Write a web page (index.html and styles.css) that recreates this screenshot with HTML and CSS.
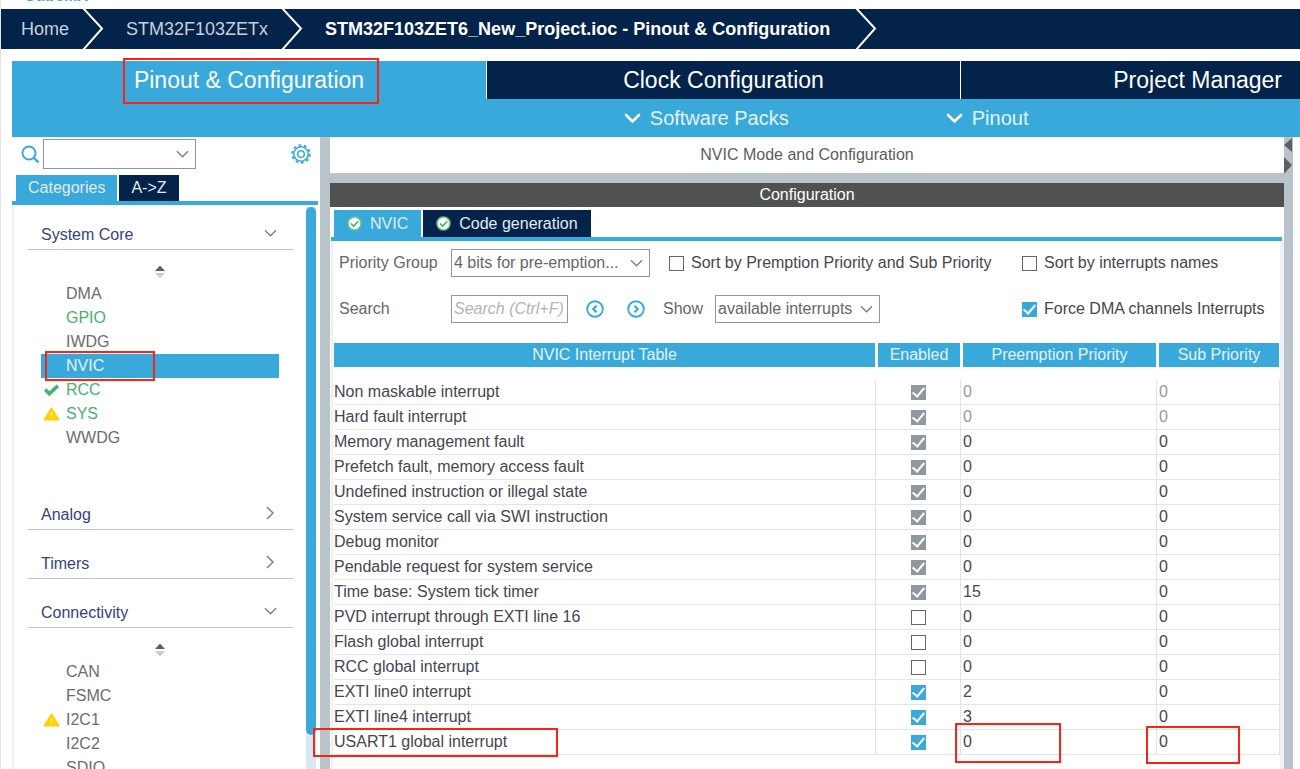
FILE: index.html
```html
<!DOCTYPE html>
<html lang="en">
<head>
<meta charset="utf-8">
<title>STM32CubeMX</title>
<link rel="stylesheet" href="styles.css">
</head>
<body>
<svg class="defs" aria-hidden="true">
  <symbol id="down" viewBox="0 0 14 8"><path d="M1 1l6 6 6-6" fill="none" stroke="currentColor" stroke-width="1.5"/></symbol>
  <symbol id="right" viewBox="0 0 8 14"><path d="M1 1l6 6-6 6" fill="none" stroke="currentColor" stroke-width="1.5"/></symbol>
  <symbol id="thick" viewBox="0 0 17 11"><path d="M2 2l6.500 6.500L15 2" fill="none" stroke="currentColor" stroke-width="2.600" stroke-linecap="round"/></symbol>
  <symbol id="crumb" viewBox="0 0 22 40"><path d="M1 -1L20 19.500L1 41" fill="none" stroke="currentColor" stroke-width="2"/></symbol>
  <symbol id="sort" viewBox="0 0 10 14"><path d="M0 6L5 0.500L10 6z" fill="#5f6161"/><path d="M0 8h10L5 13.500z" fill="#cdcdcd"/></symbol>
  <symbol id="tick" viewBox="0 0 16 12"><path d="M2 5.500l4 4L14 2" fill="none" stroke="#49b170" stroke-width="3.400"/></symbol>
  <symbol id="warn" viewBox="0 0 18 15"><path d="M9 1.500L16.500 13.500H1.500z" fill="#ffd200" stroke="#ffd200" stroke-width="2" stroke-linejoin="round"/><path d="M9 5v4.500M9 11v1.500" stroke="#fff3b0" stroke-width="1.500"/></symbol>
  <symbol id="ok" viewBox="0 0 15 15"><circle cx="7.500" cy="7.500" r="6.500" fill="#fff" stroke="#6cc48d" stroke-width="1.500"/><path d="M4 7.500l2.700 2.700L11.200 5.200" fill="none" stroke="#49b170" stroke-width="1.700"/></symbol>
  <symbol id="next" viewBox="0 0 18 18"><circle cx="9" cy="9" r="7.800" fill="none" stroke="#39a9dc" stroke-width="1.900"/><path d="M7.500 5.800L10.700 9l-3.200 3.200" fill="none" stroke="#39a9dc" stroke-width="2.200"/></symbol>
  <symbol id="prev" viewBox="0 0 18 18"><circle cx="9" cy="9" r="7.800" fill="none" stroke="#39a9dc" stroke-width="1.900"/><path d="M10.500 5.800L7.300 9l3.200 3.200" fill="none" stroke="#39a9dc" stroke-width="2.200"/></symbol>
</svg>

<div class="app">
  <header class="brand">CubeMX</header>
  <nav class="crumbs" aria-label="Breadcrumb">
    <a href="#home">Home</a><svg><use href="#crumb"/></svg>
    <a href="#device">STM32F103ZETx</a><svg><use href="#crumb"/></svg>
    <a class="current" href="#project">STM32F103ZET6_New_Project.ioc - Pinout &amp; Configuration</a><svg><use href="#crumb"/></svg>
  </nav>

  <div class="workspace">
    <div class="main-tabs">
      <button class="main-tab active"><span class="marked">Pinout &amp; Configuration<i class="mark mark-tab"></i></span></button>
      <button class="main-tab">Clock Configuration</button>
      <button class="main-tab last">Project Manager</button>
    </div>
    <div class="submenu">
      <button><svg><use href="#thick"/></svg>Software Packs</button>
      <button><svg><use href="#thick"/></svg>Pinout</button>
    </div>

    <div class="panes">
      <aside class="side">
        <div class="finder">
          <svg class="magnifier" viewBox="0 0 18 18"><circle cx="8" cy="8" r="6.500" fill="none" stroke="#39a9dc" stroke-width="2"/><path d="M12.500 12.500l5 5" stroke="#39a9dc" stroke-width="2.400"/></svg>
          <span class="combo"><select aria-label="Find peripheral"><option></option></select><svg><use href="#down"/></svg></span>
          <button class="gear" aria-label="Settings"><svg viewBox="0 0 20 20" fill="none" stroke="#39a9dc"><circle cx="10" cy="10" r="3.300" stroke-width="1.500"/><circle cx="10" cy="10" r="7.200" stroke-width="1.500"/><circle cx="10" cy="10" r="8.800" stroke-width="2" stroke-dasharray="2.764 2.764"/></svg></button>
        </div>
        <div class="tabs">
          <button class="tab active">Categories</button>
          <button class="tab">A-&gt;Z</button>
        </div>
        <div class="tree">
          <div class="sections">
            <button class="section">System Core<svg class="open"><use href="#down"/></svg></button>
            <div class="group">
              <svg class="sort"><use href="#sort"/></svg>
              <ul>
                <li><a href="#dma">DMA</a></li>
                <li><a class="green" href="#gpio">GPIO</a></li>
                <li><a href="#iwdg">IWDG</a></li>
                <li><a class="selected" href="#nvic">NVIC<i class="mark mark-item"></i></a></li>
                <li><a class="green" href="#rcc"><svg><use href="#tick"/></svg>RCC</a></li>
                <li><a class="green" href="#sys"><svg><use href="#warn"/></svg>SYS</a></li>
                <li><a href="#wwdg">WWDG</a></li>
              </ul>
            </div>
            <button class="section">Analog<svg class="closed"><use href="#right"/></svg></button>
            <button class="section">Timers<svg class="closed"><use href="#right"/></svg></button>
            <button class="section">Connectivity<svg class="open"><use href="#down"/></svg></button>
            <div class="group">
              <svg class="sort"><use href="#sort"/></svg>
              <ul>
                <li><a href="#can">CAN</a></li>
                <li><a href="#fsmc">FSMC</a></li>
                <li><a href="#i2c1"><svg><use href="#warn"/></svg>I2C1</a></li>
                <li><a href="#i2c2">I2C2</a></li>
                <li><a href="#sdio">SDIO</a></li>
              </ul>
            </div>
          </div>
          <div class="track"><div class="thumb"></div></div>
        </div>
      </aside>

      <div class="splitter"></div>

      <main class="content">
        <h1>NVIC Mode and Configuration</h1>
        <h2>Configuration</h2>
        <div class="tabs">
          <button class="tab active"><svg><use href="#ok"/></svg>NVIC</button>
          <button class="tab"><svg><use href="#ok"/></svg>Code generation</button>
        </div>
        <div class="config">
          <div class="filters">
            <label for="group">Priority Group</label>
            <div class="line">
              <span class="combo combo-group"><select id="group"><option>4 bits for pre-emption...</option></select><svg><use href="#down"/></svg></span>
              <label class="check"><input type="checkbox">Sort by Premption Priority and Sub Priority</label>
            </div>
            <label class="check"><input type="checkbox">Sort by interrupts names</label>

            <label for="search">Search</label>
            <div class="line">
              <input class="search" id="search" type="text" placeholder="Search (Ctrl+F)">
              <span class="steps">
                <button aria-label="Previous"><svg><use href="#prev"/></svg></button>
                <button aria-label="Next"><svg><use href="#next"/></svg></button>
              </span>
              <label class="show" for="show">Show</label>
              <span class="combo combo-show"><select id="show"><option>available interrupts</option></select><svg><use href="#down"/></svg></span>
            </div>
            <label class="check"><input type="checkbox" checked>Force DMA channels Interrupts</label>
          </div>

          <table>
            <colgroup><col><col class="c-on"><col class="c-pre"><col class="c-sub"></colgroup>
            <thead><tr><th>NVIC Interrupt Table</th><th>Enabled</th><th>Preemption Priority</th><th>Sub Priority</th></tr></thead>
            <tbody>
              <tr class="spacer"><td colspan="4"></td></tr>
              <tr class="fixed"><td>Non maskable interrupt</td><td><input type="checkbox" aria-label="Non maskable interrupt" checked disabled></td><td>0</td><td>0</td></tr>
              <tr class="fixed"><td>Hard fault interrupt</td><td><input type="checkbox" aria-label="Hard fault interrupt" checked disabled></td><td>0</td><td>0</td></tr>
              <tr><td>Memory management fault</td><td><input type="checkbox" aria-label="Memory management fault" checked disabled></td><td>0</td><td>0</td></tr>
              <tr><td>Prefetch fault, memory access fault</td><td><input type="checkbox" aria-label="Prefetch fault" checked disabled></td><td>0</td><td>0</td></tr>
              <tr><td>Undefined instruction or illegal state</td><td><input type="checkbox" aria-label="Undefined instruction" checked disabled></td><td>0</td><td>0</td></tr>
              <tr><td>System service call via SWI instruction</td><td><input type="checkbox" aria-label="System service call" checked disabled></td><td>0</td><td>0</td></tr>
              <tr><td>Debug monitor</td><td><input type="checkbox" aria-label="Debug monitor" checked disabled></td><td>0</td><td>0</td></tr>
              <tr><td>Pendable request for system service</td><td><input type="checkbox" aria-label="Pendable request" checked disabled></td><td>0</td><td>0</td></tr>
              <tr><td>Time base: System tick timer</td><td><input type="checkbox" aria-label="System tick timer" checked disabled></td><td>15</td><td>0</td></tr>
              <tr><td>PVD interrupt through EXTI line 16</td><td><input type="checkbox" aria-label="PVD interrupt"></td><td>0</td><td>0</td></tr>
              <tr><td>Flash global interrupt</td><td><input type="checkbox" aria-label="Flash global interrupt"></td><td>0</td><td>0</td></tr>
              <tr><td>RCC global interrupt</td><td><input type="checkbox" aria-label="RCC global interrupt"></td><td>0</td><td>0</td></tr>
              <tr><td>EXTI line0 interrupt</td><td><input type="checkbox" aria-label="EXTI line0 interrupt" checked></td><td>2</td><td>0</td></tr>
              <tr><td>EXTI line4 interrupt</td><td><input type="checkbox" aria-label="EXTI line4 interrupt" checked></td><td>3</td><td>0</td></tr>
              <tr><td>USART1 global interrupt<i class="mark mark-name"></i></td><td><input type="checkbox" aria-label="USART1 global interrupt" checked></td><td>0<i class="mark mark-pre"></i></td><td>0<i class="mark mark-sub"></i></td></tr>
            </tbody>
          </table>
        </div>
      </main>

      <div class="splitter edge">
        <svg viewBox="0 0 8 36"><path d="M8 0v14L0 7zM0 19v17l8-9z" fill="#5f6161"/></svg>
      </div>
    </div>
  </div>
</div>
</body>
</html>
```
FILE: styles.css
```css
* { box-sizing: border-box; }

:root {
  --navy: #03234b;
  --blue: #39a9dc;
  --gray: #b8c4ca;
  --line: #e1e5e8;
}

body {
  margin: 0;
  background: #fff;
  color: #464650;
  font: 16px/24px "Liberation Sans", Arial, sans-serif;
}

button, input, select { font: inherit; color: inherit; }
button { padding: 0; border: 0; background: none; }
a { color: inherit; text-decoration: none; }
svg { display: block; flex: none; }
.defs { position: absolute; width: 0; height: 0; }

.app {
  display: flex;
  flex-direction: column;
  height: 100vh;
  overflow: hidden;
  border-left: 1px solid #e6e6e6;
}

.brand {
  display: flex;
  align-items: flex-end;
  flex: none;
  height: 9px;
  padding: 0 0 4px 23px;
  overflow: hidden;
  color: var(--blue);
  font-weight: bold;
  line-height: 18px;
}

.crumbs {
  display: flex;
  align-items: center;
  flex: none;
  height: 40px;
  margin-left: -1px;
  padding-left: 21px;
  background: var(--navy);
  color: #c9d0da;
  font-size: 18px;
}
.crumbs svg { width: 22px; height: 40px; margin: 0 22px 0 13px; color: #fff; }
.crumbs .current { padding-right: 12px; color: #fff; font-weight: bold; }

.workspace {
  display: flex;
  flex-direction: column;
  flex: 1;
  min-height: 0;
  padding: 12px 0 0 11px;
}

.main-tabs {
  display: grid;
  grid-template-columns: 475fr 474fr 339fr;
  flex: none;
  height: 38px;
  font-size: 23px;
  color: #fff;
}
.main-tab { background: var(--navy); border-right: 1px solid #fff; }
.main-tab.active { background: var(--blue); }
.main-tab.last { border: 0; padding-right: 18px; text-align: right; }

.submenu {
  display: flex;
  flex: none;
  gap: 157px;
  height: 38px;
  padding-left: 47.5%;
  background: var(--blue);
  color: #e4f3fb;
  font-size: 20px;
}
.submenu button { display: flex; align-items: center; gap: 9px; }
.submenu svg { width: 17px; height: 11px; color: #fff; }

.panes { display: flex; flex: 1; min-height: 0; }

.side { display: flex; flex-direction: column; flex: none; width: 308px; padding-right: 2px; }
.finder {
  display: flex;
  align-items: center;
  flex: none;
  height: 38px;
  padding: 0 7px 4px 9px;
}
.magnifier { width: 18px; height: 18px; margin-right: 4px; }
.gear { margin-left: auto; }
.gear svg { width: 20px; height: 20px; }

.combo { display: grid; align-items: center; width: 153px; height: 30px; color: #666; }
.combo > * { grid-area: 1 / 1; }
.combo select {
  width: 100%;
  height: 100%;
  padding: 0 0 0 2px;
  border: 1px solid #8f989f;
  border-radius: 0;
  background: #fff;
  appearance: none;
}
.combo svg { width: 13px; height: 8px; margin-right: 7px; justify-self: end; pointer-events: none; color: #808080; }

.tabs { display: flex; flex: none; gap: 2px; padding-left: 4px; border-bottom: 4px solid var(--blue); }
.tab {
  display: flex;
  align-items: center;
  height: 26px;
  padding: 0 12px;
  background: var(--navy);
  color: #e4eaf0;
}
.tab.active { background: var(--blue); }
.tab svg { width: 15px; height: 15px; margin-right: 8px; }

.tree { display: flex; flex: 1; min-height: 0; border-left: 2px solid #eef1f3; overflow: hidden; }
.sections { flex: 1; padding-left: 14px; margin-right: 13px; }
.section {
  display: flex;
  align-items: center;
  justify-content: space-between;
  width: 100%;
  height: 49px;
  padding: 22px 16px 2px 13px;
  border-bottom: 1px solid var(--gray);
  color: #35437a;
}
.section:first-child { height: 45px; padding-top: 20px; padding-bottom: 4px; }
.section svg { color: #808080; margin-bottom: 4px; }
.section .open { width: 13px; height: 8px; }
.section .closed { width: 8px; height: 14px; margin-right: 3px; }

.group { padding: 15px 14px 31px 13px; }
.sort { width: 10px; height: 14px; margin: 0 auto 3px; }
.group ul { margin: 0; padding: 0; list-style: none; color: #6c6c6c; }
.group a { display: flex; align-items: center; position: relative; height: 24px; padding-left: 25px; }
.group svg:not(.sort) { width: 17px; height: 14px; margin: 0 6px 0 -23px; }
.group .green { color: #49b170; }
.group .selected { background: var(--blue); color: #e4f3fb; }

.track { flex: none; width: 10px; margin: 2px 2px 0 0; background: #d8e8f6; }
.thumb { height: 94%; border-radius: 5px; background: var(--blue); }

.splitter { flex: none; width: 10px; background: var(--gray); }
.edge { width: 9px; margin-right: 7px; }
.edge svg { width: 8px; height: 36px; margin-top: 1px; }

.content { display: flex; flex-direction: column; flex: 1; min-width: 0; }
.content h1, .content h2 { margin: 0; flex: none; font-size: 16px; font-weight: normal; text-align: center; }
.content h1 { height: 46px; border-bottom: 10px solid var(--gray); line-height: 36px; color: #5c5c60; }
.content h2 { height: 24px; background: #50524f; color: #fff; line-height: 24px; }
.content .tabs { margin: 3px 2px 0 1px; padding-left: 3px; }
.content .tab { height: 27px; padding: 0 13px; }

.config { flex: 1; padding-top: 8px; padding-left: 1px; border: solid #eef1f3; border-width: 0 4px 0 2px; margin-left: 1px; }

.filters {
  display: grid;
  grid-template-columns: 112px 1fr 258px;
  grid-auto-rows: 28px;
  row-gap: 18px;
  align-items: center;
  padding-left: 5px;
  color: #666;
}
.line { display: flex; align-items: center; }
.combo-group { width: 199px; height: 28px; margin-right: 19px; }
.combo-show { width: 165px; height: 28px; }
.search { width: 117px; height: 28px; padding: 0 2px; border: 1px solid #8f989f; background: #fff; }
.search::placeholder { color: #b4b4b4; font-style: italic; opacity: 1; }
.steps { display: flex; gap: 23px; margin: 0 18px 0 18px; }
.steps svg { width: 18px; height: 18px; }
.show { margin-right: 12px; }

.check { display: flex; align-items: center; gap: 7px; color: #464650; white-space: nowrap; }
input[type="checkbox"] {
  display: inline-grid;
  place-content: center;
  flex: none;
  width: 15px;
  height: 15px;
  margin: 0;
  border: 1px solid #666;
  background: #fff;
  appearance: none;
}
input[type="checkbox"]:checked { border-color: var(--blue); background: var(--blue); }
input[type="checkbox"]:checked:disabled { border-color: #8f989f; background: #8f989f; }
input[type="checkbox"]:checked::before {
  content: "";
  width: 5px;
  height: 10px;
  margin-bottom: 2px;
  border: solid #fff;
  border-width: 0 2px 2px 0;
  transform: rotate(40deg);
}

table { width: 100%; margin-top: 20px; border-collapse: separate; border-spacing: 0; table-layout: fixed; }
.c-on { width: 85px; }
.c-pre { width: 196px; }
.c-sub { width: 123px; }
th {
  height: 24px;
  padding: 0;
  border: solid #fff;
  border-width: 0 1px 0 2px;
  background: var(--blue);
  color: #e4f3fb;
  font-weight: normal;
}
th:first-child { border-left: 0; }
td {
  position: relative;
  height: 25px;
  padding: 0;
  border: solid var(--line);
  border-width: 0 1px 1px 0;
}
td:nth-child(2) { text-align: center; line-height: 0; }
td:nth-child(n+3) { padding-left: 2px; }
.spacer td { height: 13px; border: 0; }
.fixed td:nth-child(n+3) { color: #999; }

.marked { position: relative; }
.mark { position: absolute; z-index: 1; border: 2px solid #fa2414; pointer-events: none; }
.mark-tab { inset: -9px -15px -11px -11px; }
.mark-item { left: 4px; top: -3px; width: 110px; height: 30px; }
.mark-name { left: -21px; top: -2px; width: 245px; height: 29px; }
.mark-pre { left: -6px; top: -7px; width: 106px; height: 40px; }
.mark-sub { left: -11px; top: -4px; width: 94px; height: 38px; }
```
